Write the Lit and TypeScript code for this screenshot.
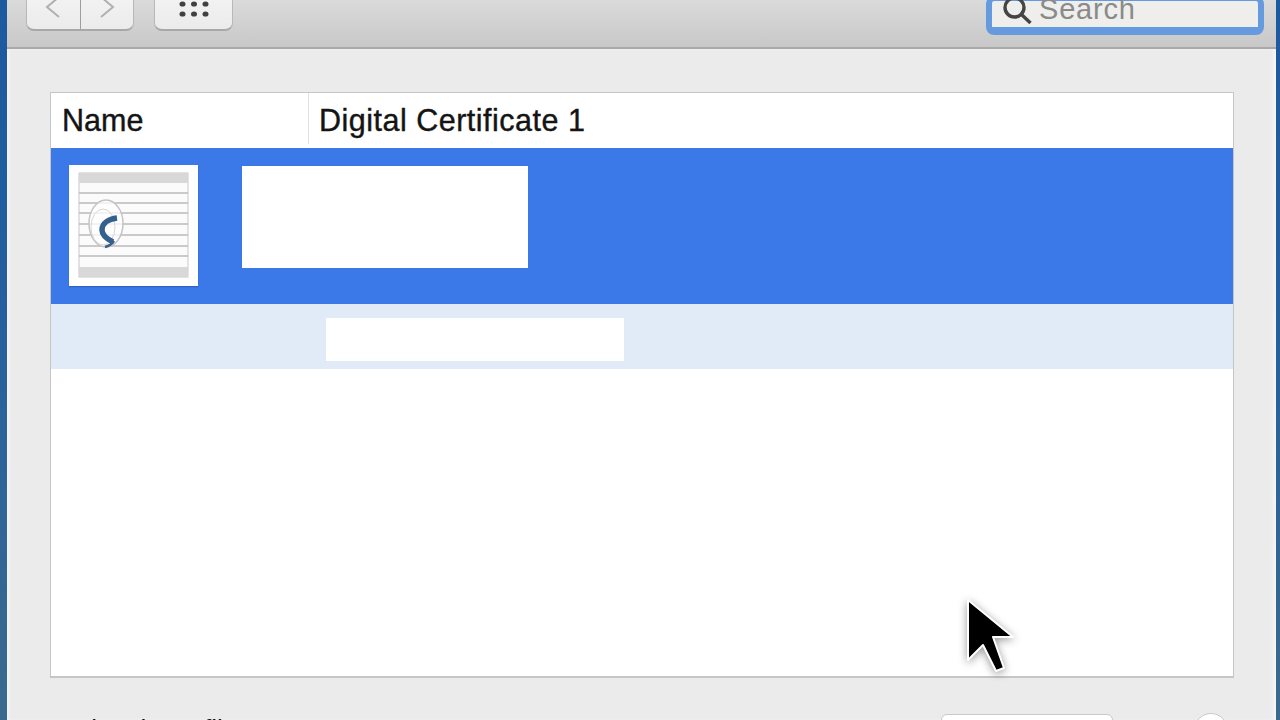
import { LitElement, html, css } from "lit";
import { customElement } from "lit/decorators.js";

@customElement("app-root")
export class AppRoot extends LitElement {
  static styles = css`
    :host {
      display: block;
      width: 1280px;
      height: 720px;
      overflow: hidden;
      font-family: "Liberation Sans", Arial, sans-serif;
      background: linear-gradient(180deg, #1c5a9e 0%, #24609f 40%, #3a6a8e 100%);
      position: relative;
    }
    .window {
      margin: 0 4px 0 7px;
      height: 720px;
      display: flex;
      flex-direction: column;
      background: #ebebeb;
      overflow: hidden;
    }
    .toolbar {
      flex: none;
      box-sizing: border-box;
      height: 49px;
      background: linear-gradient(180deg, #dadada 0%, #c8c8c8 100%);
      border-bottom: 2px solid #a9a9a9;
      display: flex;
      align-items: flex-end;
      padding: 0 12px 16px 19px;
    }
    .tb-btn {
      box-sizing: border-box;
      height: 40px;
      margin-top: -9px;
      background: linear-gradient(180deg, #f4f4f4, #ebebeb);
      border: 1px solid #b8b8b8;
      border-bottom: 2px solid #a8a8a8;
      border-radius: 0 0 8px 8px;
      display: flex;
      align-items: flex-end;
      justify-content: center;
    }
    .nav {
      width: 108px;
      display: flex;
      align-items: stretch;
      padding: 0;
    }
    .nav span {
      flex: 1;
      display: flex;
      align-items: flex-end;
      justify-content: center;
      padding-bottom: 11px;
    }
    .nav span:first-child {
      border-right: 1px solid #9e9e9e;
    }
    .grid {
      width: 79px;
      margin-left: 20px;
      padding-bottom: 12px;
    }
    .spacer { flex: 1; }
    .search {
      box-sizing: border-box;
      width: 278px;
      height: 39px;
      margin-bottom: -4px;
      background: #eeeeec;
      border-style: solid;
      border-color: #659ade;
      border-width: 5px 6px 8px;
      border-radius: 8px;
      display: flex;
      align-items: flex-end;
      gap: 7px;
      padding: 0 0 3px 10px;
      color: #8a8a8a;
      font-size: 29px;
      line-height: 30px;
      letter-spacing: 0.8px;
    }
    .search svg { flex: none; margin-bottom: -1px; }
    .content {
      flex: 1;
      min-height: 0;
      padding: 43px 42px 0 43px;
      box-shadow: inset 3px 0 3px -1px #f6f6f6, inset -5px 0 4px -2px #f6f6f6;
    }
    .table {
      box-sizing: border-box;
      height: 586px;
      background: #fff;
      border: 1px solid #c6c6c6;
      border-bottom-width: 2px;
    }
    .head {
      box-sizing: border-box;
      height: 55px;
      display: flex;
      align-items: flex-start;
      color: #141414;
      -webkit-text-stroke: 0.4px #141414;
    }
    .col-name {
      box-sizing: border-box;
      width: 258px;
      height: 51px;
      padding: 0 0 0 11px;
      border-right: 1px solid #e2e2e2;
      font-size: 30.5px;
      line-height: 55px;
    }
    .col-cert {
      padding-left: 10px;
      font-size: 30.5px;
      letter-spacing: 0.5px;
      line-height: 55px;
    }
    .selected {
      height: 156px;
      background: #3b78e8;
      display: flex;
      align-items: flex-start;
      padding-top: 17px;
      box-sizing: border-box;
    }
    .thumb {
      flex: none;
      width: 129px;
      height: 121px;
      margin-left: 18px;
      background: #fff;
      box-shadow: 0 1px 1px rgba(30, 60, 120, 0.35);
    }
    .sel-text {
      flex: none;
      width: 286px;
      height: 102px;
      margin: 1px 0 0 44px;
      background: #fff;
    }
    .alt {
      box-sizing: border-box;
      height: 65px;
      background: #e1ebf8;
      padding: 14px 0 0 275px;
    }
    .alt-text {
      width: 298px;
      height: 43px;
      background: #fff;
    }
    .footer {
      display: flex;
      align-items: flex-start;
      padding-top: 36px;
      height: 8px;
    }
    .foot-label {
      font-size: 26px;
      line-height: 30px;
      color: #141414;
      margin: 0 0 0 11px;
      white-space: nowrap;
    }
    .foot-btn {
      box-sizing: border-box;
      width: 172px;
      height: 40px;
      background: #fff;
      border: 1px solid #c9c9c9;
      border-radius: 6px;
      text-align: center;
      font-size: 26px;
      line-height: 40px;
      color: #141414;
    }
    .help {
      box-sizing: border-box;
      width: 34px;
      height: 34px;
      margin: -1px 6px 0 81px;
      border-radius: 50%;
      background: #fff;
      border: 1px solid #c9c9c9;
    }
    .cursor {
      position: absolute;
      left: 958px;
      top: 592px;
      filter: drop-shadow(0 2px 4px rgba(0, 0, 0, 0.4));
    }
  `;

  render() {
    return html`
      <div class="window">
        <div class="toolbar">
          <div class="tb-btn nav">
            <span>
              <svg width="18" height="22" viewBox="0 0 18 22" fill="none" stroke="#b0b0b0" stroke-width="2"><path d="M15 1 3 11l12 10"/></svg>
            </span>
            <span>
              <svg width="18" height="22" viewBox="0 0 18 22" fill="none" stroke="#b0b0b0" stroke-width="2"><path d="M3 1l12 10L3 21"/></svg>
            </span>
          </div>
          <div class="tb-btn grid">
            <svg width="30" height="16" viewBox="0 0 30 16" fill="#404040">
              <ellipse cx="3.5" cy="3" rx="3" ry="2.6"/><ellipse cx="15" cy="3" rx="3" ry="2.6"/><ellipse cx="26.5" cy="3" rx="3" ry="2.6"/>
              <ellipse cx="3.5" cy="13" rx="3" ry="2.6"/><ellipse cx="15" cy="13" rx="3" ry="2.6"/><ellipse cx="26.5" cy="13" rx="3" ry="2.6"/>
            </svg>
          </div>
          <div class="spacer"></div>
          <div class="search">
            <svg width="30" height="30" viewBox="0 0 30 30" fill="none" stroke="#444" stroke-width="3.4"><circle cx="12.5" cy="12.5" r="9.5"/><path d="m19.5 19.500 9 8.500"/></svg>
            <span>Search</span>
          </div>
        </div>
        <div class="content">
          <div class="table">
            <div class="head">
              <div class="col-name">Name</div>
              <div class="col-cert">Digital Certificate 1</div>
            </div>
            <div class="selected">
              <div class="thumb">
                <svg width="129" height="121" viewBox="0 0 129 121">
                  <rect x="10" y="8" width="109" height="104" fill="#fbfbfb" stroke="#c8c8c8" stroke-width="1"/>
                  <rect x="10" y="8" width="109" height="10" fill="#d8d8d8"/>
                  <rect x="10" y="102" width="109" height="10" fill="#d8d8d8"/>
                  <g stroke="#bababa" stroke-width="1.4">
                    <path d="M10 28h109M10 38h109M10 48h109M10 59h109M10 70h109M10 81h109M10 91h109"/>
                  </g>
                  <ellipse cx="37" cy="58.500" rx="17" ry="23.500" fill="#fff" fill-opacity="0.75" stroke="#c4c4c4" stroke-width="1.500"/>
                  <ellipse cx="34" cy="62" rx="12" ry="18" fill="none" stroke="#d6d6d6" stroke-width="1"/>
                  <path d="M48 53C40 54 33 58 33 65c0 5 5 9 11 12" fill="none" stroke="#33608f" stroke-width="5.500"/>
                  <path d="M45 76c-2 3-5 5-9 6" fill="none" stroke="#3a5f88" stroke-width="2.500"/>
                </svg>
              </div>
              <div class="sel-text"></div>
            </div>
            <div class="alt"><div class="alt-text"></div></div>
          </div>
          <div class="footer">
            <div class="foot-label">Ask to keep file</div>
            <div class="spacer"></div>
            <div class="foot-btn">Advanced</div>
            <div class="help"></div>
          </div>
        </div>
      </div>
      <svg class="cursor" width="70" height="90" viewBox="0 0 70 90">
        <path d="M10 8v60l15-15 13 26 8-3-11-31h20z" fill="#000" stroke="#fff" stroke-width="2" stroke-linejoin="round"/>
      </svg>
    `;
  }
}
